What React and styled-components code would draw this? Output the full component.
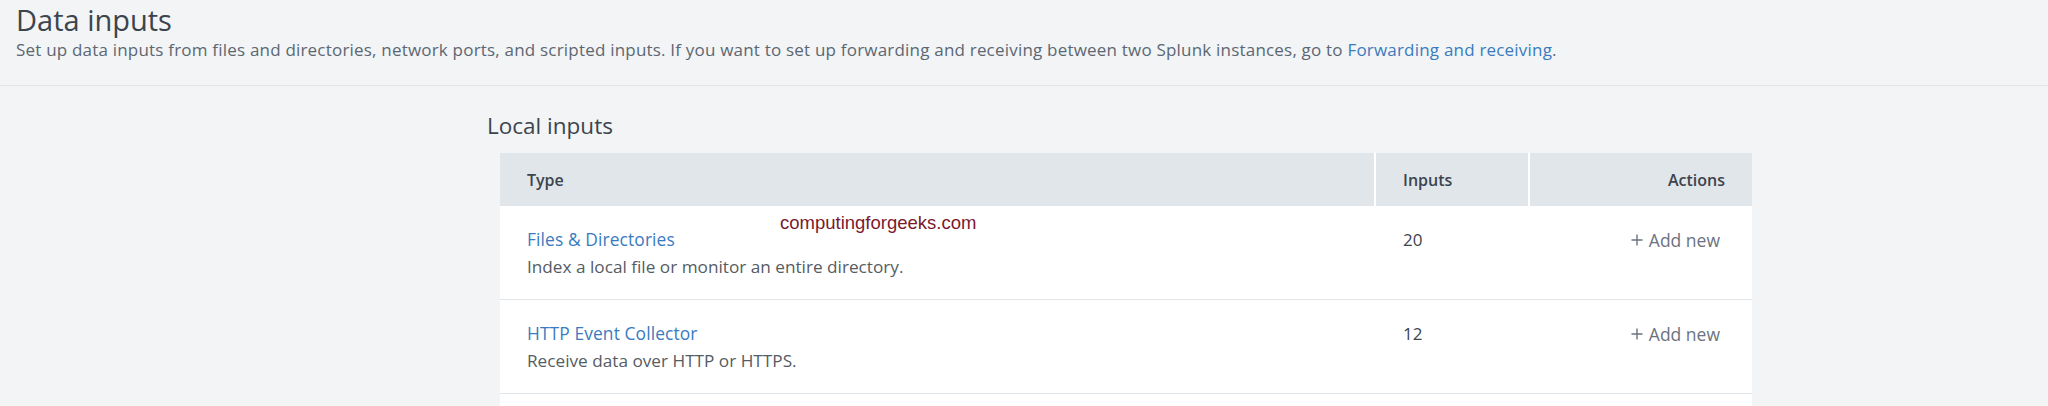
import React from "react";
import styled, { createGlobalStyle } from "styled-components";

const GlobalStyle = createGlobalStyle`
  html, body {
    margin: 0;
    padding: 0;
    background: #f2f4f5;
    font-family: "Open Sans", "Liberation Sans", sans-serif;
    color: #3c444d;
  }
`;

const Page = styled.div`
  height: 406px;
  overflow: hidden;
  background: #f2f4f5;
`;

const Header = styled.header`
  padding: 0 0 24px 16px;
  border-bottom: 1px solid #e1e4e8;
`;

const Title = styled.h1`
  margin: 0;
  font-size: 29px;
  line-height: 40px;
  font-weight: 400;
  color: #3c444d;
`;

const Subtitle = styled.p`
  margin: -1px 0 0;
  font-size: 17px;
  letter-spacing: 0.2px;
  line-height: 22px;
  color: #5c6773;
  white-space: nowrap;
`;

const Link = styled.a`
  color: #3a7bbf;
  text-decoration: none;
  cursor: pointer;
`;

const Section = styled.section`
  padding: 25px 0 0 487px;
`;

const SectionTitle = styled.h2`
  margin: 0 0 12px;
  font-size: 22.5px;
  line-height: 30px;
  font-weight: 500;
  color: #3c444d;
`;

const Table = styled.div`
  margin-left: 13px;
  width: 1252px;
  display: grid;
  grid-template-columns: 874px 154px 224px;
  padding-bottom: 40px;
  background: #ffffff;
`;

const HeadCell = styled.div`
  box-sizing: border-box;
  height: 53px;
  padding: 2px 27px 0;
  line-height: 51px;
  font-size: 16px;
  font-weight: 600;
  color: #3c444d;
  background: #e1e6eb;
  text-align: ${(p) => (p.$right ? "right" : "left")};
  border-left: ${(p) => (p.$divider ? "2px solid #ffffff" : "none")};
`;

const Cell = styled.div`
  position: relative;
  box-sizing: border-box;
  padding: 20px ${(p) => (p.$right ? "32px" : "27px")} 19px
    ${(p) => (p.$pad ? p.$pad : 27)}px;
  font-size: 17px;
  line-height: 27px;
  color: #3c444d;
  border-bottom: 1px solid #e1e6eb;
  text-align: ${(p) => (p.$right ? "right" : "left")};
`;

const TypeLink = styled(Link)`
  display: block;
  font-size: 17.4px;
  letter-spacing: 0.1px;
`;

const Description = styled.div`
  color: #555c63;
  font-size: 17.2px;
`;

const AddNew = styled.a`
  display: inline-flex;
  align-items: center;
  gap: 6px;
  color: #6b7380;
  cursor: pointer;
  font-size: 17.5px;
`;

const Watermark = styled.span`
  position: absolute;
  left: 280px;
  top: 8px;
  font-family: "Liberation Sans", Arial, sans-serif;
  font-size: 18.5px;
  line-height: 18.5px;
  color: #7b1a2e;
  white-space: nowrap;
`;

const PlusIcon = () => (
  <svg width="12" height="12" viewBox="0 0 12 12" aria-hidden="true">
    <path d="M6 0.5v11M0.5 6h11" stroke="currentColor" strokeWidth="1.4" fill="none" />
  </svg>
);

const inputs = [
  {
    name: "Files & Directories",
    desc: "Index a local file or monitor an entire directory.",
    count: 20,
  },
  {
    name: "HTTP Event Collector",
    desc: "Receive data over HTTP or HTTPS.",
    count: 12,
  },
];

export default function App() {
  return (
    <Page>
      <GlobalStyle />
      <Header>
        <Title>Data inputs</Title>
        <Subtitle>
          Set up data inputs from files and directories, network ports, and
          scripted inputs. If you want to set up forwarding and receiving
          between two Splunk instances, go to{" "}
          <Link>Forwarding and receiving</Link>.
        </Subtitle>
      </Header>
      <Section>
        <SectionTitle>Local inputs</SectionTitle>
        <Table>
          <HeadCell>Type</HeadCell>
          <HeadCell $divider>Inputs</HeadCell>
          <HeadCell $divider $right>
            Actions
          </HeadCell>
          {inputs.map((item, i) => (
            <React.Fragment key={item.name}>
              <Cell>
                {i === 0 && <Watermark>computingforgeeks.com</Watermark>}
                <TypeLink>{item.name}</TypeLink>
                <Description>{item.desc}</Description>
              </Cell>
              <Cell $pad={29}>{item.count}</Cell>
              <Cell $right>
                <AddNew>
                  <PlusIcon />
                  Add new
                </AddNew>
              </Cell>
            </React.Fragment>
          ))}
        </Table>
      </Section>
    </Page>
  );
}
